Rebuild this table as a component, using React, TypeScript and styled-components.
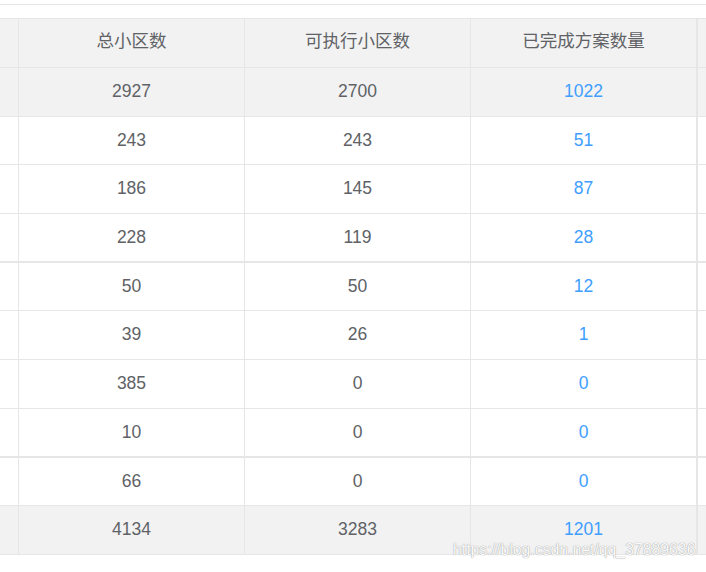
import React from "react";
import styled, { createGlobalStyle } from "styled-components";

const GlobalStyle = createGlobalStyle`
  html, body { margin: 0; padding: 0; background: #ffffff; }
  body { font-family: "Liberation Sans", "Noto Sans CJK SC", sans-serif; }
`;

const Page = styled.div`
  position: relative;
  width: 706px;
  height: 572px;
  overflow: hidden;
  padding-top: 4px;
  box-sizing: border-box;
`;

const TopRule = styled.div`
  border-top: 1px solid #e6e6e6;
  height: 13px;
`;

const Table = styled.div`
  border-top: 1px solid #e6e6e6;
`;

const Row = styled.div<{ $h: number; $shaded?: boolean; $thick?: boolean }>`
  display: grid;
  grid-template-columns: 19px 226px 226px 227px 1fr;
  height: ${(p) => p.$h}px;
  background: ${(p) => (p.$shaded ? "#f2f2f2" : "#ffffff")};
  box-sizing: border-box;
  border-bottom: ${(p) => (p.$thick ? 2 : 1)}px solid #e6e6e6;
`;

const Cell = styled.div<{ $blue?: boolean; $edge?: number; $lift?: number }>`
  display: flex;
  align-items: center;
  justify-content: center;
  box-sizing: border-box;
  padding-bottom: ${(p) => p.$lift ?? 1}px;
  border-right: ${(p) => (p.$edge === undefined ? 1 : p.$edge)}px solid #e6e6e6;
  font-size: 17.5px;
  line-height: 1.2;
  color: ${(p) => (p.$blue ? "#409eff" : "#606266")};
  white-space: nowrap;
`;

const Watermark = styled.div`
  position: absolute;
  left: 453px;
  top: 541px;
  font-family: "Liberation Sans", sans-serif;
  font-size: 15.8px;
  color: rgba(255, 255, 255, 0.95);
  text-shadow: 0 0 1px #a0a0a0, 0 0 1px #b8b8b8;
  white-space: nowrap;
`;

type R = { a: string; b: string; c: string; h: number; shaded?: boolean; thick?: boolean };

const rows: R[] = [
  { a: "2927", b: "2700", c: "1022", h: 49, shaded: true },
  { a: "243", b: "243", c: "51", h: 48 },
  { a: "186", b: "145", c: "87", h: 49 },
  { a: "228", b: "119", c: "28", h: 49, thick: true },
  { a: "50", b: "50", c: "12", h: 48 },
  { a: "39", b: "26", c: "1", h: 49 },
  { a: "385", b: "0", c: "0", h: 49 },
  { a: "10", b: "0", c: "0", h: 49, thick: true },
  { a: "66", b: "0", c: "0", h: 48 },
  { a: "4134", b: "3283", c: "1201", h: 49, shaded: true },
];

export default function App() {
  return (
    <>
      <GlobalStyle />
      <Page>
        <TopRule />
        <Table>
          <Row $h={49} $shaded>
            <Cell />
            <Cell $lift={3}>总小区数</Cell>
            <Cell $lift={3}>可执行小区数</Cell>
            <Cell $lift={3} $edge={2}>已完成方案数量</Cell>
            <Cell $edge={0} />
          </Row>
          {rows.map((r, i) => (
            <Row key={i} $h={r.h} $shaded={r.shaded} $thick={r.thick}>
              <Cell />
              <Cell>{r.a}</Cell>
              <Cell>{r.b}</Cell>
              <Cell $blue $edge={2}>{r.c}</Cell>
              <Cell $edge={0} />
            </Row>
          ))}
        </Table>
        <Watermark>https://blog.csdn.net/qq_37889636</Watermark>
      </Page>
    </>
  );
}
